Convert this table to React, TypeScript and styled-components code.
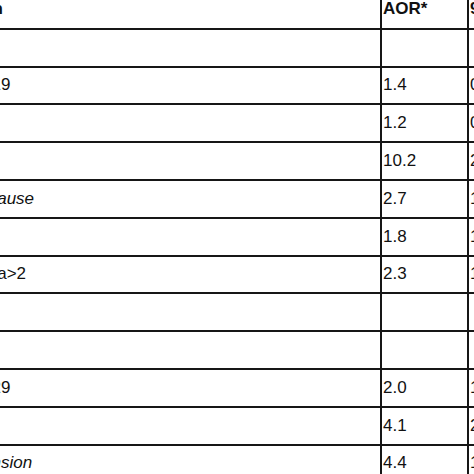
import React from "react";
import styled, { createGlobalStyle } from "styled-components";

const GlobalStyle = createGlobalStyle`
  html, body {
    margin: 0;
    padding: 0;
    background: #fff;
    overflow: hidden;
  }
`;

const Frame = styled.div`
  width: 474px;
  height: 474px;
  overflow: hidden;
  background: #fff;
`;

const Table = styled.table`
  margin-left: -72px;
  margin-top: -9px;
  border-collapse: collapse;
  table-layout: fixed;
  width: 660px;
  font-family: "Liberation Sans", Arial, sans-serif;
  font-size: 17px;
  color: #111;
`;

const Row = styled.tr`
  height: 37.8px;
`;

interface ICellProps {
  $italic?: boolean;
  $first?: boolean;
}

const HeadCell = styled.th<ICellProps>`
  border: 2px solid #161616;
  border-top: none;
  border-left: ${({ $first }) => ($first ? "none" : "2px solid #161616")};
  padding: 0 0 0 ${({ $first }) => ($first ? "4px" : "1px")};
  text-align: left;
  vertical-align: middle;
  font-weight: bold;
  white-space: nowrap;
  overflow: hidden;
`;

const Cell = styled.td<ICellProps>`
  border: 2px solid #161616;
  border-left: ${({ $first }) => ($first ? "none" : "2px solid #161616")};
  padding: 0 0 0 ${({ $first }) => ($first ? "4px" : "1px")};
  vertical-align: middle;
  font-style: ${({ $italic }) => ($italic ? "italic" : "normal")};
  white-space: nowrap;
  overflow: hidden;
`;

type Line = {
  label: string;
  italic?: boolean;
  aor: string;
  ci: string;
};

const rows: Line[] = [
  { label: "Mother", aor: "", ci: "" },
  { label: "Age 15-19", aor: "1.4", ci: "0.9-2.1" },
  { label: "Age 35+", aor: "1.2", ci: "0.8-1.9" },
  { label: "Anemia", aor: "10.2", ci: "2.3-44.1" },
  { label: "Known cause", italic: true, aor: "2.7", ci: "1.3-5.4" },
  { label: "Obese", aor: "1.8", ci: "1.1-2.9" },
  { label: "Total para>2", aor: "2.3", ci: "1.2-4.4" },
  { label: "Facility", aor: "", ci: "" },
  { label: "Infant", aor: "", ci: "" },
  { label: "Age 20-29", aor: "2.0", ci: "1.1-3.6" },
  { label: "Preterm", aor: "4.1", ci: "2.0-8.5" },
  { label: "Hypertension", italic: true, aor: "4.4", ci: "1.6-12.1" },
  { label: "Other", aor: "1.1", ci: "0.7-1.8" }
];

const App = () => {
  return (
    <Frame>
      <GlobalStyle />
      <Table>
        <colgroup>
          <col style={{ width: 453 }} />
          <col style={{ width: 87 }} />
          <col style={{ width: 120 }} />
        </colgroup>
        <thead>
          <Row>
            <HeadCell $first>Location</HeadCell>
            <HeadCell>AOR*</HeadCell>
            <HeadCell>95% CI</HeadCell>
          </Row>
        </thead>
        <tbody>
          {rows.map((row, rowId) => (
            <Row key={rowId}>
              <Cell $first $italic={row.italic}>
                {row.label}
              </Cell>
              <Cell>{row.aor}</Cell>
              <Cell>{row.ci}</Cell>
            </Row>
          ))}
        </tbody>
      </Table>
    </Frame>
  );
};

export default App;
